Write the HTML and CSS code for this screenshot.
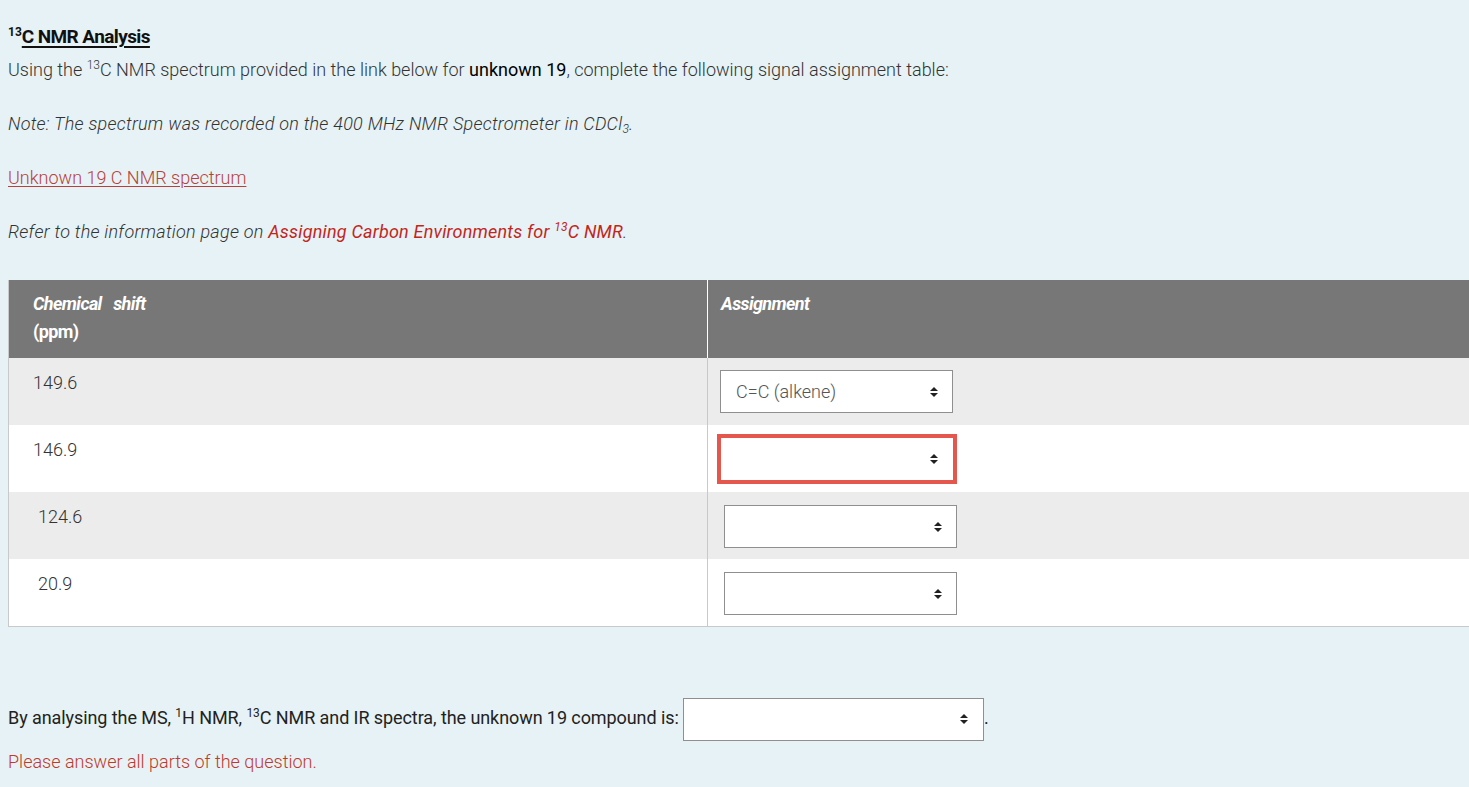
FILE: index.html
```html
<!DOCTYPE html>
<html>
<head>
<meta charset="utf-8">
<link rel="stylesheet" href="styles.css">
</head>
<body>
<div class="page">
  <h4 class="title"><sup>13</sup><u>C NMR Analysis</u></h4>
  <p class="intro">Using the <sup>13</sup>C NMR spectrum provided in the link below for <b>unknown 19</b>, complete the following signal assignment table:</p>
  <p class="note">Note: The spectrum was recorded on the 400 MHz NMR Spectrometer in CDCl<sub>3</sub>.</p>
  <p class="linkline"><a class="plain-link" href="#">Unknown 19 C NMR spectrum</a></p>
  <p class="note">Refer to the information page on <a class="info-link" href="#">Assigning Carbon Environments for <sup>13</sup>C NMR</a>.</p>

  <table class="grid">
    <thead>
      <tr>
        <th class="col-shift"><em>Chemical&nbsp;&nbsp; shift</em><br><span class="unit">(ppm)</span></th>
        <th class="col-assign"><em>Assignment</em></th>
      </tr>
    </thead>
    <tbody>
      <tr class="odd">
        <td>149.6</td>
        <td><div class="sel sel-a"><span>C=C (alkene)</span><i class="arrows"></i></div></td>
      </tr>
      <tr class="even">
        <td>146.9</td>
        <td><div class="sel sel-err"><span></span><i class="arrows"></i></div></td>
      </tr>
      <tr class="odd">
        <td class="shifted">124.6</td>
        <td><div class="sel sel-b"><span></span><i class="arrows"></i></div></td>
      </tr>
      <tr class="even">
        <td class="shifted">20.9</td>
        <td><div class="sel sel-b"><span></span><i class="arrows"></i></div></td>
      </tr>
    </tbody>
  </table>

  <p class="final">By analysing the MS, <sup>1</sup>H NMR, <sup>13</sup>C NMR and IR spectra, the unknown 19 compound is: <span class="sel sel-wide"><span></span><i class="arrows"></i></span>.</p>
  <p class="warn">Please answer all parts of the question.</p>
</div>
</body>
</html>
```

FILE: styles.css
```css
html, body {
  margin: 0;
  padding: 0;
}
body {
  background: #e6f2f5;
  font-family: Roboto, "Liberation Sans", sans-serif;
  color: #333;
  font-weight: 300;
  font-size: 18px;
  overflow: hidden;
}
.page {
  padding: 24px 0 0 8px;
}
sup, sub {
  font-size: 12px;
  line-height: 0;
}
.title {
  margin: 0;
  font-size: 19px;
  font-weight: 700;
  color: #111;
  letter-spacing: -0.6px;
  line-height: 26px;
}
.title sup {
  font-size: 12px;
  vertical-align: 7px;
  letter-spacing: 0;
}
.title u {
  text-decoration-thickness: 2px;
  text-underline-offset: 3px;
}
p {
  margin: 0;
  line-height: 24px;
}
.intro {
  margin-top: 8px;
}
.intro sup {
  vertical-align: 7px;
}
.intro b {
  font-weight: 400;
  color: #000;
}
.note {
  margin-top: 30px;
  font-style: italic;
  letter-spacing: 0.25px;
}
.note sub {
  vertical-align: -3px;
}
.note sup {
  vertical-align: 7px;
}
.linkline {
  margin-top: 30px;
}
.plain-link {
  color: #b8403a;
  text-decoration: underline;
  text-underline-offset: 2px;
}
.info-link {
  color: #c2261b;
  font-weight: 400;
  text-decoration: none;
  letter-spacing: 0.2px;
}
.grid {
  margin-top: 36px;
  width: 1470px;
  border-collapse: collapse;
  border-left: 1px solid #c9c9c9;
  border-bottom: 1px solid #c9c9c9;
}
.grid th {
  background: #777;
  color: #fff;
  text-align: left;
  vertical-align: top;
  font-weight: 700;
  font-size: 18px;
  line-height: 28px;
  letter-spacing: -0.6px;
  height: 78px;
  box-sizing: border-box;
  padding: 10px 0 0 24px;
}
.grid th em {
  font-style: italic;
}
.grid th .unit {
  font-style: normal;
}
.grid th.col-shift {
  width: 699px;
  border-right: 1px solid #fff;
}
.grid th.col-assign {
  padding-left: 13px;
}
.grid td {
  height: 67px;
  box-sizing: border-box;
  vertical-align: top;
  padding: 15px 0 0 24px;
  line-height: 20px;
  color: #333;
}
.grid td + td {
  border-left: 1px solid #c9c9c9;
  padding: 12px 0 0 12px;
}
.grid td.shifted {
  padding-left: 29px;
}
.odd td {
  background: #ececec;
}
.even td {
  background: #fff;
}
.sel {
  box-sizing: border-box;
  display: flex;
  align-items: center;
  justify-content: space-between;
  width: 233px;
  height: 43px;
  background: #fff;
  border: 1px solid #8f8f8f;
  padding: 0 14px 0 15px;
  font-size: 18px;
  color: #555;
}
.sel-err {
  width: 240px;
  height: 50px;
  border: 4px solid #e5574c;
  margin: -3px 0 0 -3px;
  padding: 0 15px 0 15px;
}
.sel-b {
  margin: 1px 0 0 4px;
}
.sel-wide {
  display: inline-flex;
  vertical-align: middle;
  width: 301px;
  height: 43px;
  padding-right: 15px;
  letter-spacing: 0;
}
.arrows {
  position: relative;
  width: 8px;
  height: 10px;
}
.arrows::before, .arrows::after {
  content: "";
  position: absolute;
  left: 0;
  width: 0;
  height: 0;
  border-left: 4px solid transparent;
  border-right: 4px solid transparent;
}
.arrows::before {
  top: 0;
  border-bottom: 4px solid #222;
}
.arrows::after {
  bottom: 0;
  border-top: 4px solid #222;
}
.final {
  margin-top: 71px;
  font-weight: 400;
  color: #222;
  letter-spacing: -0.08px;
}
.final sup {
  vertical-align: 7px;
}
.warn {
  margin-top: 9px;
  color: #c0392b;
}
```
